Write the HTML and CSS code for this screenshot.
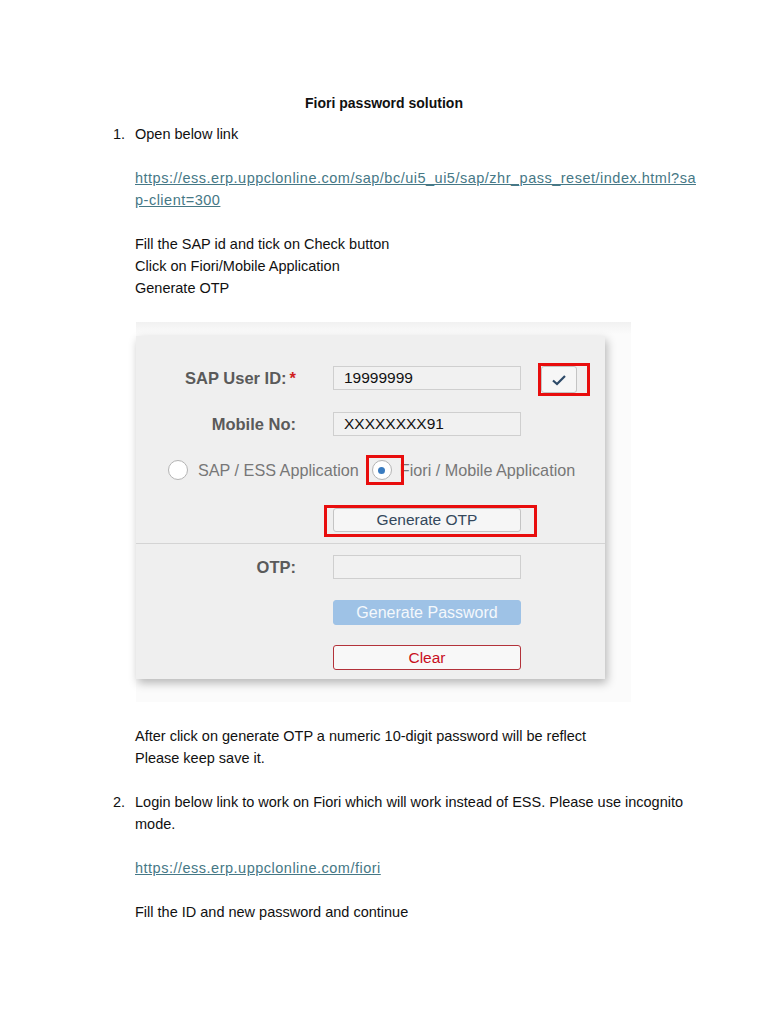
FILE: index.html
```
<!DOCTYPE html>
<html lang="en">
<head>
  <meta charset="UTF-8">
  <meta name="viewport" content="width=device-width, initial-scale=1.0">
  <title>Fiori password solution</title>
  <link rel="stylesheet" href="styles.css">
</head>
<body>
  <div class="doc">
    <h1 class="title">Fiori password solution</h1>

    <!-- Step 1 -->
    <div class="step">
      <span class="num">1.</span>
      <div class="step-body">
        <p>Open below link</p>
        <p class="gap"><a class="link" href="#">https://ess.erp.uppclonline.com/sap/bc/ui5_ui5/sap/zhr_pass_reset/index.html?sa<br>p-client=300</a></p>
        <p class="gap">Fill the SAP id and tick on Check button<br>Click on Fiori/Mobile Application<br>Generate OTP</p>

        <!-- screenshot of the reset form -->
        <div class="shot">
          <div class="card">
            <div class="form-row">
              <span class="label">SAP User ID:<span class="req">*</span></span>
              <span class="input">19999999</span>
              <span class="check-btn marked">
                <svg width="16" height="12" viewBox="0 0 16 12"><path d="M2 6.5 L6 10 L14 2" fill="none" stroke="#2d4a68" stroke-width="2.2"/></svg>
              </span>
            </div>
            <div class="form-row row-gap">
              <span class="label">Mobile No:</span>
              <span class="input">XXXXXXXX91</span>
            </div>
            <div class="radio-row">
              <span class="radio"></span>
              <span class="radio-text">SAP / ESS Application</span>
              <span class="radio selected marked-radio"><span class="dot"></span></span>
              <span class="radio-text">Fiori / Mobile Application</span>
            </div>
            <div class="form-row otp-btn-row">
              <span class="label"></span>
              <span class="btn marked-wide">Generate OTP</span>
            </div>
            <div class="divider"></div>
            <div class="form-row otp-row">
              <span class="label">OTP:</span>
              <span class="input"></span>
            </div>
            <div class="form-row pw-row">
              <span class="label"></span>
              <span class="btn btn-primary">Generate Password</span>
            </div>
            <div class="form-row clear-row">
              <span class="label"></span>
              <span class="btn btn-clear">Clear</span>
            </div>
          </div>
        </div>

        <p>After click on generate OTP a numeric 10-digit password will be reflect<br>Please keep save it.</p>
      </div>
    </div>

    <!-- Step 2 -->
    <div class="step step-two">
      <span class="num">2.</span>
      <div class="step-body">
        <p>Login below link to work on Fiori which will work instead of ESS. Please use incognito mode.</p>
        <p class="gap"><a class="link" href="#">https://ess.erp.uppclonline.com/fiori</a></p>
        <p class="gap">Fill the ID and new password and continue</p>
      </div>
    </div>
  </div>
</body>
</html>
```

FILE: styles.css
```
/* Page */
body {
  margin: 0;
  background: #fff;
  color: #111;
  font-family: 'Liberation Sans', Arial, sans-serif;
  font-size: 14.5px;
}

.doc {
  padding: 92px 68px 40px 68px;
}

.title {
  margin: 0;
  font-size: 14px;
  line-height: 22px;
  font-weight: bold;
  text-align: center;
}

p {
  margin: 0;
  line-height: 22px;
}

.gap {
  margin-top: 22px;
}

.link {
  color: #467886;
  text-decoration: underline;
  letter-spacing: 0.5px;
  white-space: nowrap;
}

/* Numbered steps */
.step {
  display: flex;
  margin-top: 9px;
  padding-left: 45px;
}

.step-two {
  margin-top: 22px;
}

.num {
  width: 22px;
  line-height: 22px;
  flex-shrink: 0;
}

.step-body {
  flex: 1;
}

/* Screenshot */
.shot {
  width: 495px;
  height: 380px;
  margin: 23px 0 23px 1px;
  padding-top: 14px;
  box-sizing: border-box;
  background: linear-gradient(#f1f1f1, #fbfbfb 12px);
}

.card {
  width: 469px;
  height: 343px;
  padding-top: 30px;
  box-sizing: border-box;
  background: #efefef;
  box-shadow: 2px 4px 9px rgba(0, 0, 0, 0.28);
  font-family: 'Liberation Sans', Arial, sans-serif;
  font-size: 15.5px;
}

.form-row {
  display: flex;
  align-items: center;
  height: 24px;
}

.row-gap {
  margin-top: 22px;
}

.label {
  width: 160px;
  flex-shrink: 0;
  text-align: right;
  font-weight: bold;
  font-size: 16.5px;
  color: #5a5a5a;
}

.req {
  color: #d01f1f;
  margin-left: 3px;
}

.input {
  margin-left: 37px;
  width: 188px;
  height: 24px;
  box-sizing: border-box;
  padding-left: 10px;
  line-height: 22px;
  background: #f1f1f1;
  border: 1px solid #cfcfcf;
  color: #111;
}

.check-btn {
  position: relative;
  margin-left: 20px;
  margin-top: 3px;
  width: 36px;
  height: 27px;
  box-sizing: border-box;
  display: flex;
  align-items: center;
  justify-content: center;
  background: #f6f6f6;
  border: 1px solid #c4c4c4;
  border-radius: 3px;
}

/* red annotation boxes */
.marked::after,
.marked-wide::after,
.marked-radio::after {
  content: '';
  position: absolute;
  border: 3px solid #e80d0d;
}

.marked::after {
  top: -4px;
  left: -4px;
  right: -14px;
  bottom: -4px;
}

.marked-wide::after {
  top: -4px;
  left: -10px;
  right: -17px;
  bottom: -6px;
}

.marked-radio::after {
  top: -6px;
  left: -7px;
  right: -13px;
  bottom: -6px;
}

/* Radio buttons */
.radio-row {
  display: flex;
  align-items: center;
  height: 24px;
  margin-top: 22px;
  padding-left: 32px;
  color: #777;
  font-size: 16.2px;
}

.radio {
  position: relative;
  width: 20px;
  height: 20px;
  box-sizing: border-box;
  border: 1px solid #b4b4b4;
  border-radius: 50%;
  background: #fff;
  display: flex;
  align-items: center;
  justify-content: center;
}

.radio-text {
  margin-left: 10px;
}

.selected {
  margin-left: 13px;
}

.selected + .radio-text {
  margin-left: 8px;
}

.dot {
  width: 7px;
  height: 7px;
  border-radius: 50%;
  background: #3a7cc0;
}

/* Buttons */
.btn {
  position: relative;
  margin-left: 37px;
  width: 188px;
  height: 24px;
  box-sizing: border-box;
  display: flex;
  align-items: center;
  justify-content: center;
  background: #f6f6f6;
  border: 1px solid #c4c4c4;
  border-radius: 3px;
  color: #34485c;
}

.otp-btn-row {
  margin-top: 26px;
}

.divider {
  margin-top: 11px;
  height: 1px;
  background: #d4d4d4;
}

.otp-row {
  margin-top: 11px;
}

.pw-row {
  margin-top: 21px;
  height: 25px;
}

.btn-primary {
  height: 25px;
  background: #9ec2e6;
  border-color: #9ec2e6;
  color: #f4f8fc;
  font-size: 16px;
}

.clear-row {
  margin-top: 20px;
  height: 25px;
}

.btn-clear {
  height: 25px;
  background: #f8f8f8;
  border-color: #b3323a;
  color: #c8101e;
}
```
